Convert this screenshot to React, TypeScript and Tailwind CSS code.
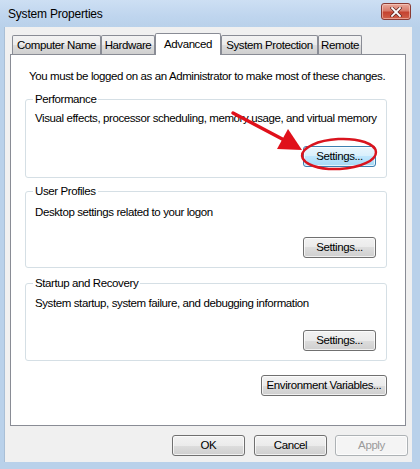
import React from "react";

type BtnKind = "normal" | "hot" | "disabled";

function Btn({
  label,
  kind = "normal",
  className = "",
}: {
  label: string;
  kind?: BtnKind;
  className?: string;
}) {
  const skin =
    kind === "hot"
      ? "border-[#3c7fb1] bg-[linear-gradient(to_bottom,#eaf6fd_0%,#d9f0fc_45%,#bee6fd_50%,#a7d9f5_100%)] text-black"
      : kind === "disabled"
      ? "border-[#adb2b5] bg-[#f4f4f4] text-[#9a9a9a]"
      : "border-[#707070] bg-[linear-gradient(to_bottom,#f2f2f2_0%,#ebebeb_50%,#dddddd_50%,#cfcfcf_100%)] text-black";
  return (
    <button
      className={`h-[21px] rounded-[3px] border shadow-[inset_0_0_0_1px_rgba(255,255,255,0.7)] text-[11.5px] leading-none whitespace-nowrap flex items-center justify-center ${skin} ${className}`}
    >
      {label}
    </button>
  );
}

function Group({
  title,
  desc,
  className = "",
  pt,
  gap,
  pb,
}: {
  title: string;
  desc: string;
  className?: string;
  pt: string;
  gap: string;
  pb: string;
}) {
  return (
    <div
      className={`relative ml-[14px] mr-[18px] rounded-[3px] border border-[#d5dfe5] pl-[9px] pr-[10px] ${pt} ${pb} ${className}`}
    >
      <span className="absolute left-[7px] top-[-9px] bg-white px-[2px] text-[11.5px] leading-[16px] whitespace-nowrap text-black">
        {title}
      </span>
      <div className="text-[11.5px] leading-[16px] whitespace-nowrap text-black">{desc}</div>
      <div className={`flex justify-end ${gap}`}>
        <Btn label="Settings..." kind={title === "Performance" ? "hot" : "normal"} className="w-[73px]" />
      </div>
    </div>
  );
}

const tabs = [
  { name: "Computer Name", w: "w-[89px]" },
  { name: "Hardware", w: "w-[54px]" },
  { name: "Advanced", w: "w-[66px]" },
  { name: "System Protection", w: "w-[97px]" },
  { name: "Remote", w: "w-[44px]" },
];

export default function App() {
  return (
    <div className="relative w-[420px] h-[469px] overflow-hidden bg-[#b9d1ea] font-['Liberation_Sans',Arial,sans-serif] tracking-[-0.4px] text-black select-none">
      {/* window caption */}
      <div className="h-[27px] flex items-center justify-between bg-[linear-gradient(to_bottom,#cddff3_0%,#bfd5ee_60%,#b9d1ea_100%)] pl-[8px] pr-[9px]">
        <span className="text-[12px] tracking-[-0.2px] leading-[16px] text-black">System Properties</span>
        <div className="mb-[4px] w-[30px] h-[17px] rounded-[3px] border border-[#8a3a33] bg-[linear-gradient(to_bottom,#e9a99b_0%,#d87a6a_45%,#c54330_55%,#d0604a_100%)] flex items-center justify-center shadow-[inset_0_0_0_1px_rgba(255,220,210,0.5)]">
          <svg width="12" height="10" viewBox="0 0 12 10">
            <path d="M2 1 L10 9 M10 1 L2 9" stroke="#5a2420" strokeWidth="3.2" strokeLinecap="square" />
            <path d="M2 1 L10 9 M10 1 L2 9" stroke="#ffffff" strokeWidth="1.8" strokeLinecap="square" />
          </svg>
        </div>
      </div>

      {/* client area */}
      <div className="ml-[4px] w-[408px] h-[435px] bg-[#f0f0f0] border-l border-[#a9bfd6] flex flex-col">
        {/* tab strip */}
        <div className="mt-[6px] ml-[7px] flex items-end h-[21px]">
          {tabs.map((t) =>
            t.name === "Advanced" ? (
              <div
                key={t.name}
                className={`${t.w} relative z-10 -mb-px h-[22px] border border-b-0 border-[#898c95] bg-white flex items-center justify-center whitespace-nowrap text-[11.5px] leading-[16px] pb-[2px] rounded-t-[2px]`}
              >
                {t.name}
              </div>
            ) : (
              <div
                key={t.name}
                className={`${t.w} h-[19px] border border-b-0 border-[#898c95] bg-[linear-gradient(to_bottom,#f3f3f3_0%,#ebebeb_50%,#dddddd_50%,#cfcfcf_100%)] flex items-center justify-center whitespace-nowrap text-[11.5px] leading-[16px] rounded-t-[2px]`}
              >
                {t.name}
              </div>
            )
          )}
        </div>

        {/* tab page */}
        <div className="ml-[5px] w-[396px] h-[372px] border border-[#898c95] bg-white flex flex-col">
          <div className="mt-[13px] pl-[18px] text-[11.5px] leading-[16px] whitespace-nowrap">
            You must be logged on as an Administrator to make most of these changes.
          </div>

          <Group
            title="Performance"
            desc="Visual effects, processor scheduling, memory usage, and virtual memory"
            className="mt-[15px]"
            pt="pt-[10px]"
            gap="mt-[20px]"
            pb="pb-[10px]"
          />
          <Group
            title="User Profiles"
            desc="Desktop settings related to your logon"
            className="mt-[13px]"
            pt="pt-[12px]"
            gap="mt-[17px]"
            pb="pb-[9px]"
          />
          <Group
            title="Startup and Recovery"
            desc="System startup, system failure, and debugging information"
            className="mt-[15px]"
            pt="pt-[11px]"
            gap="mt-[19px]"
            pb="pb-[9px]"
          />

          <div className="mt-[14px] mr-[18px] flex justify-end">
            <Btn label="Environment Variables..." className="w-[126px]" />
          </div>
        </div>

        {/* dialog buttons */}
        <div className="mt-[9px] flex justify-end gap-[9px] pr-[4px]">
          <Btn label="OK" className="w-[73px]" />
          <Btn label="Cancel" className="w-[73px] mr-[-1px]" />
          <Btn label="Apply" kind="disabled" className="w-[73px]" />
        </div>
      </div>

      {/* red callout: arrow and ring round the Performance settings button */}
      <svg
        className="absolute inset-0 pointer-events-none"
        width="420"
        height="469"
        viewBox="0 0 420 469"
      >
        <line x1="233" y1="113" x2="286" y2="141" stroke="#e0101a" strokeWidth="3.5" strokeLinecap="round" />
        <polygon points="302,150 277,149 288,129" fill="#e0101a" />
        <ellipse
          cx="339"
          cy="154"
          rx="37"
          ry="15"
          fill="none"
          stroke="#d9141e"
          strokeWidth="2.5"
          transform="rotate(-3 339 154)"
        />
      </svg>
    </div>
  );
}
